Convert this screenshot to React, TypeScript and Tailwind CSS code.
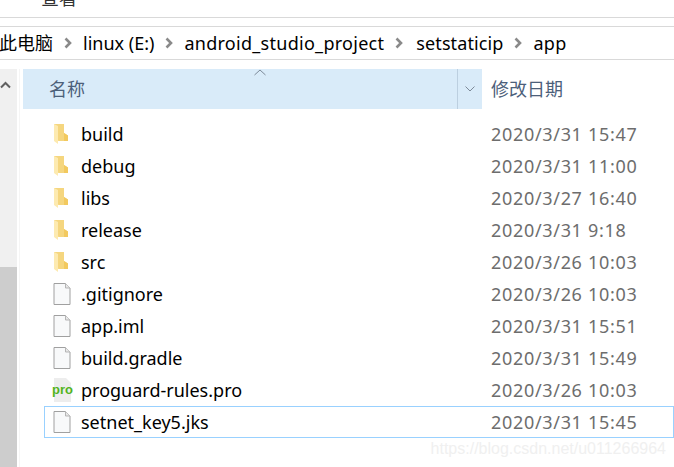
const FONT = { fontFamily: '"Noto Sans", "Noto Sans CJK SC", sans-serif' };

type Kind = "folder" | "file" | "pro";

const rows: { name: string; date: string; kind: Kind }[] = [
  { name: "build", date: "2020/3/31 15:47", kind: "folder" },
  { name: "debug", date: "2020/3/31 11:00", kind: "folder" },
  { name: "libs", date: "2020/3/27 16:40", kind: "folder" },
  { name: "release", date: "2020/3/31 9:18", kind: "folder" },
  { name: "src", date: "2020/3/26 10:03", kind: "folder" },
  { name: ".gitignore", date: "2020/3/26 10:03", kind: "file" },
  { name: "app.iml", date: "2020/3/31 15:51", kind: "file" },
  { name: "build.gradle", date: "2020/3/31 15:49", kind: "file" },
  { name: "proguard-rules.pro", date: "2020/3/26 10:03", kind: "pro" },
  { name: "setnet_key5.jks", date: "2020/3/31 15:45", kind: "file" },
];

const crumbs = [
  { label: "linux (E:)", cls: "tracking-[0px]" },
  { label: "android_studio_project", cls: "tracking-[0.28px]" },
  { label: "setstaticip", cls: "ml-[2px] tracking-[0.1px]" },
  { label: "app", cls: "tracking-[0.3px]" },
];

function FolderIcon() {
  return (
    <svg width="18" height="22" viewBox="0 0 18 22">
      <path d="M1 1h10v9l4 2.500V18H6L1 17z" fill="#f5d67f" />
      <path d="M11 10l4 2.500V18h-4z" fill="#f2c95f" />
      <path d="M1 1l4 2v18l-4-3z" fill="#fdeab0" />
    </svg>
  );
}

function FileIcon() {
  return (
    <svg width="18" height="22" viewBox="0 0 18 22">
      <path d="M1 .5h11.500l4.500 4.500v16.500H1z" fill="#f8f9fa" stroke="#a0a0a0" />
      <path d="M12.500.5V5H17" fill="#e8e8e8" stroke="#b5b5b5" />
    </svg>
  );
}

function ProIcon() {
  return (
    <div className="relative w-[20px] h-[24px] -ml-[1px]">
      <svg width="20" height="24" viewBox="0 0 20 24">
        <path d="M2 0h12l5 5v19H2z" fill="#ededed" />
      </svg>
      <span
        className="absolute left-0 top-[5px] text-[13px] leading-[14px] font-bold text-[#52b41d]"
        style={{ fontFamily: '"Liberation Sans", sans-serif' }}
      >
        pro
      </span>
    </div>
  );
}

function Row({ name, date, kind, selected }: { name: string; date: string; kind: Kind; selected: boolean }) {
  return (
    <div
      className={`flex items-center h-[32px] ml-[27px] pl-[8px] border ${
        selected ? "border-[#99d1ff]" : "border-transparent"
      }`}
    >
      <div className="w-[28px] shrink-0 flex items-center">
        {kind === "folder" && <FolderIcon />}
        {kind === "file" && <FileIcon />}
        {kind === "pro" && <ProIcon />}
      </div>
      <span className="w-[410px] shrink-0 text-[18px] leading-[24px] text-black">{name}</span>
      <span className="text-[18px] leading-[24px] tracking-[0.68px] text-[#6d6d6d] whitespace-nowrap">{date}</span>
    </div>
  );
}

export default function App() {
  return (
    <div className="w-[674px] h-[467px] bg-white overflow-hidden relative" style={FONT}>
      {/* ribbon tab, cut off at the top */}
      <div className="h-[18px] border-b border-[#d9d9d9] overflow-hidden">
        <div className="pl-[41px] -mt-[15px] text-[18px] leading-[26px] text-[#333]">查看</div>
      </div>

      {/* address bar */}
      <div className="mt-[8px] h-[34px] border-y border-[#d9d9d9] flex items-center text-[18px] text-black whitespace-nowrap">
        <span className="-ml-[1px]">此电脑</span>
        {crumbs.map((c) => (
          <div key={c.label} className="flex items-center">
            <svg width="10" height="12" viewBox="0 0 10 12" className="mx-[10px]">
              <path d="M2.500 1.500 7 6l-4.500 4.500" fill="none" stroke="#8a8a8a" strokeWidth="2.600" />
            </svg>
            <span className={c.cls}>{c.label}</span>
          </div>
        ))}
      </div>

      <div className="flex mt-[9px]">
        {/* scrollbar */}
        <div className="w-[17px] h-[398px] bg-[#f0f0f0] flex flex-col shrink-0">
          <div className="h-[198px] pt-[12px]">
            <svg width="12" height="8" viewBox="0 0 12 8">
              <path d="M1 6.500 5.500 2 10 6.500" fill="none" stroke="#606060" strokeWidth="2" />
            </svg>
          </div>
          <div className="flex-1 bg-[#cdcdcd]" />
        </div>
        <div className="w-[1px] h-[398px] ml-[2px] -mr-[3px] bg-[#f5f5f5] shrink-0" />

        <div className="flex-1 min-w-0 relative">
          {/* column headers */}
          <div className="flex h-[40px] ml-[6px]">
            <div className="w-[459px] bg-[#d9ebf9] flex items-center relative shrink-0">
              <span className="pl-[26px] text-[18px] text-[#4c607a]">名称</span>
              <svg width="12" height="7" viewBox="0 0 12 7" className="absolute left-[231px] top-0">
                <path d="M.5 6 6 1l5.500 5" fill="none" stroke="#7d8a99" />
              </svg>
              <div className="ml-auto w-[25px] h-full border-l border-[#bccfe0] flex items-center justify-center">
                <svg width="10" height="6" viewBox="0 0 10 6">
                  <path d="M.5.5 5 5 9.500.5" fill="none" stroke="#7d8a99" />
                </svg>
              </div>
            </div>
            <span className="pl-[9px] text-[18px] leading-[40px] text-[#4c607a] whitespace-nowrap">修改日期</span>
          </div>

          {/* file rows */}
          <div className="mt-[9px]">
            {rows.map((r, i) => (
              <Row key={r.name} {...r} selected={i === rows.length - 1} />
            ))}
          </div>
        </div>
      </div>

      {/* image watermark */}
      <div
        className="absolute right-[8px] bottom-[8px] text-[16px] leading-[20px] text-[#f0f0f0]"
        style={{ fontFamily: '"Liberation Sans", sans-serif' }}
      >
        https://blog.csdn.net/u011266964
      </div>
    </div>
  );
}
